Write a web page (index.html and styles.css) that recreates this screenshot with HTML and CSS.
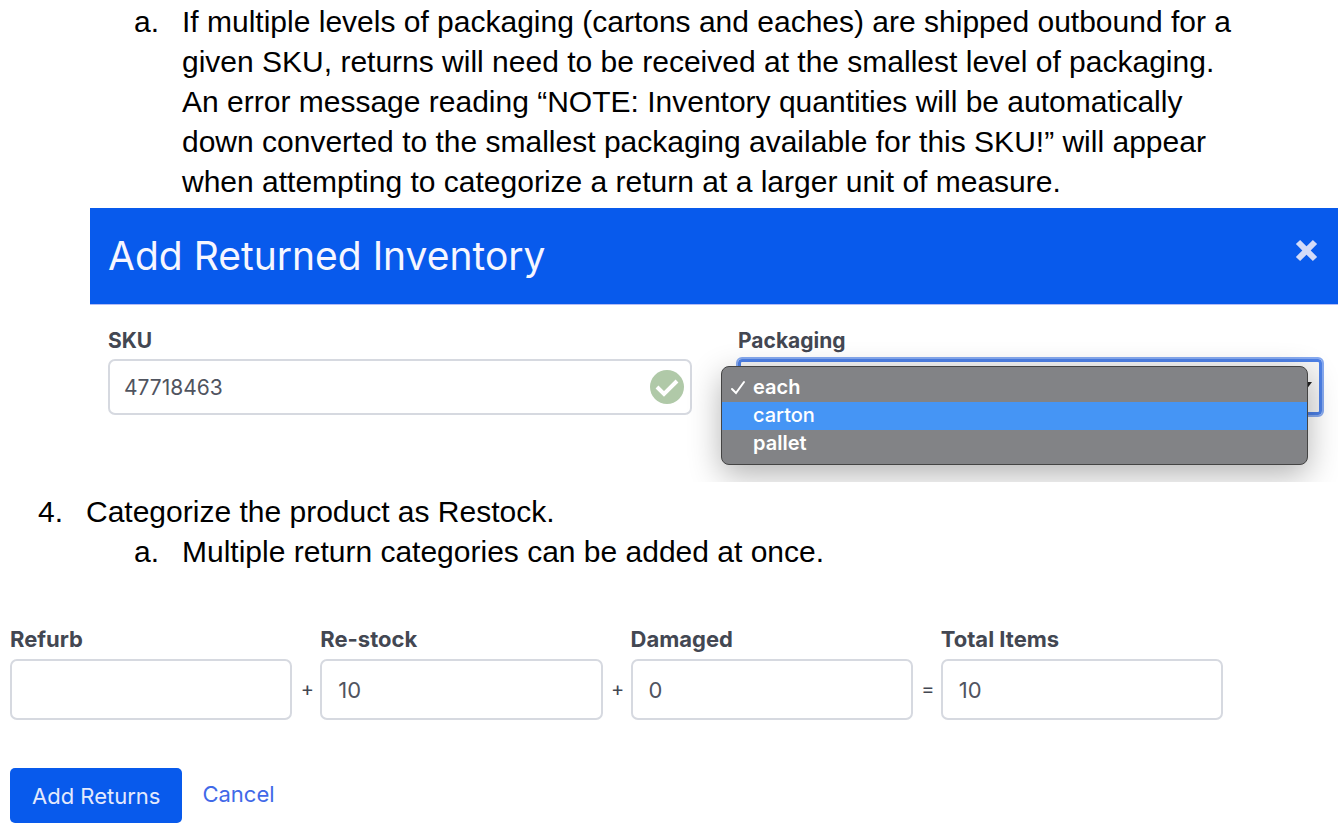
FILE: index.html
```html
<!DOCTYPE html>
<html lang="en">

<head>
    <meta charset="UTF-8" />
    <meta name="viewport" content="width=device-width, initial-scale=1.0" />
    <title>Add Returned Inventory</title>
    <link rel="stylesheet" href="styles.css">
</head>

<body>
    <!-- packaging note -->
    <ol class="steps steps-nested">
        <li class="step">
            <span class="marker">a.</span>
            <p class="step-text">If multiple levels of packaging (cartons and eaches) are shipped outbound for a given SKU, returns will need to be received at the smallest level of packaging. An error message reading “NOTE: Inventory quantities will be automatically down converted to the smallest packaging available for this SKU!” will appear when attempting to categorize a return at a larger unit of measure.</p>
        </li>
    </ol>

    <!-- returned inventory dialog -->
    <section class="modal">
        <header class="modal-header">
            <h2 class="modal-title">Add Returned Inventory</h2>
            <button class="close" type="button" aria-label="Close">
                <svg width="26" height="26" viewBox="0 0 26 26">
                    <path d="M4 4L21 21M21 4L4 21" stroke="#d3dbf8" stroke-width="6" stroke-linejoin="round" />
                </svg>
            </button>
        </header>
        <div class="modal-body">
            <div class="field">
                <label class="label" for="sku">SKU</label>
                <div class="control">
                    <input class="input" id="sku" type="text" value="47718463">
                    <svg class="valid" width="36" height="36" viewBox="0 0 36 36">
                        <circle cx="18" cy="18" r="17" fill="#b0c9a8" />
                        <path d="M8 18L15 25L28 12" fill="none" stroke="#fff" stroke-width="4" />
                    </svg>
                </div>
            </div>
            <div class="field">
                <label class="label" for="packaging">Packaging</label>
                <div class="control">
                    <select class="input select" id="packaging">
                        <option selected>each</option>
                        <option>carton</option>
                        <option>pallet</option>
                    </select>
                    <svg class="arrow" width="12" height="8" viewBox="0 0 12 8">
                        <path d="M0 0H12L6 8Z" fill="#222" />
                    </svg>
                    <ul class="menu" role="listbox" aria-label="Packaging">
                        <li class="option" role="option" aria-selected="true">
                            <svg class="tick" width="16" height="16" viewBox="0 0 16 16">
                                <path d="M2 9L6 13L14 2" fill="none" stroke="#fff" stroke-width="2" stroke-linecap="round" />
                            </svg>
                            each
                        </li>
                        <li class="option option-active" role="option">carton</li>
                        <li class="option" role="option">pallet</li>
                    </ul>
                </div>
            </div>
        </div>
    </section>

    <!-- step 4 -->
    <ol class="steps steps-main">
        <li class="step">
            <span class="marker">4.</span>
            <div class="step-text">
                Categorize the product as Restock.
                <ol class="steps substeps">
                    <li class="step">
                        <span class="marker">a.</span>
                        <p class="step-text">Multiple return categories can be added at once.</p>
                    </li>
                </ol>
            </div>
        </li>
    </ol>

    <!-- return quantities -->
    <form class="returns">
        <div class="quantities">
            <div class="field">
                <label class="label" for="refurb">Refurb</label>
                <input class="input" id="refurb" type="text">
            </div>
            <span class="operator">+</span>
            <div class="field">
                <label class="label" for="restock">Re-stock</label>
                <input class="input" id="restock" type="text" value="10">
            </div>
            <span class="operator">+</span>
            <div class="field">
                <label class="label" for="damaged">Damaged</label>
                <input class="input" id="damaged" type="text" value="0">
            </div>
            <span class="operator">=</span>
            <div class="field">
                <label class="label" for="total">Total Items</label>
                <input class="input" id="total" type="text" value="10">
            </div>
        </div>
        <div class="actions">
            <button class="add" type="button">Add Returns</button>
            <a class="cancel" href="#">Cancel</a>
        </div>
    </form>
</body>

</html>
```
FILE: styles.css
```css
* {
    box-sizing: border-box;
}

body {
    margin: 0;
    padding: 2px 0 8px;
    background-color: #fff;
    color: #434752;
    font-family: Inter, "Liberation Sans", sans-serif;
    font-size: 22px;
}

/* document text */
.steps {
    margin: 0;
    padding: 0;
    list-style: none;
    color: #000;
    font-family: "Liberation Sans", Arial, sans-serif;
    font-size: 30px;
    line-height: 40px;
}

.steps-nested {
    padding: 0 100px 0 134px;
}

.steps-main {
    padding: 10px 100px 0 38px;
}

.substeps {
    padding-left: 48px;
}

.step {
    display: flex;
}

.marker {
    flex: 0 0 48px;
}

.step-text {
    flex: 1;
    margin: 0;
}

/* dialog */
.modal {
    height: 274px;
    margin: 6px 6px 0 90px;
    overflow: hidden;
}

.modal-header {
    display: flex;
    justify-content: space-between;
    align-items: center;
    height: 97px;
    padding: 0 18px 2px;
    background-color: #085aec;
    border-bottom: 1px solid #b3bcf5;
}

.modal-title {
    margin: 0;
    color: #f6f6ff;
    font-size: 39px;
    font-weight: 400;
}

.close {
    display: flex;
    padding: 0 0 8px;
    border: none;
    background: none;
    cursor: pointer;
}

.modal-body {
    display: flex;
    gap: 46px;
    padding: 24px 16px 0 18px;
}

/* form fields */
.field {
    flex: 1;
    min-width: 0;
}

.label {
    display: block;
    margin-bottom: 6px;
    font-size: 21px;
    font-weight: 700;
    line-height: 24px;
}

.control {
    position: relative;
}

.input {
    display: block;
    width: 100%;
    height: 56px;
    padding: 0 14px;
    border: 2px solid #d6d9e0;
    border-radius: 7px;
    background-color: #fff;
    color: #50545f;
    font-family: inherit;
    font-size: 21px;
}

.valid {
    position: absolute;
    top: 10px;
    right: 7px;
}

.select {
    appearance: none;
    border: 3px solid #4d80e6;
    border-radius: 4px;
    outline: 2px solid #87aaf0;
    background-color: #f6f6f6;
}

.arrow {
    position: absolute;
    top: 23px;
    right: 10px;
}

/* open list over the select */
.menu {
    position: absolute;
    top: 7px;
    left: -17px;
    right: 14px;
    margin: 0;
    padding: 7px 0 6px;
    list-style: none;
    border: 1px solid #444;
    border-radius: 8px;
    background-color: #828386;
    box-shadow: 0 10px 32px rgba(0, 0, 0, 0.3);
}

.option {
    position: relative;
    padding-left: 31px;
    color: #fff;
    font-size: 20px;
    font-weight: 600;
    line-height: 26px;
    padding-bottom: 2px;
}

.option-active {
    background-color: #4595f5;
    font-weight: 500;
}

.tick {
    position: absolute;
    top: 6px;
    left: 8px;
}

/* quantities */
.returns {
    padding: 55px 121px 0 10px;
}

.quantities {
    display: flex;
    align-items: flex-end;
}

.quantities .label {
    margin-bottom: 8px;
    font-size: 22px;
}

.quantities .input {
    height: 61px;
    padding: 0 16px;
    font-size: 22px;
}

.operator {
    flex: 0 0 28px;
    padding-left: 2px;
    font-size: 20px;
    line-height: 61px;
    text-align: center;
}

.actions {
    display: flex;
    align-items: center;
    gap: 20px;
    margin-top: 48px;
}

.add {
    height: 55px;
    padding: 0 22px;
    border: none;
    border-radius: 5px;
    background-color: #085aec;
    color: #e3e9fd;
    font-family: inherit;
    font-size: 22px;
    cursor: pointer;
}

.cancel {
    padding-bottom: 4px;
    color: #4169e8;
    text-decoration: none;
}
```
